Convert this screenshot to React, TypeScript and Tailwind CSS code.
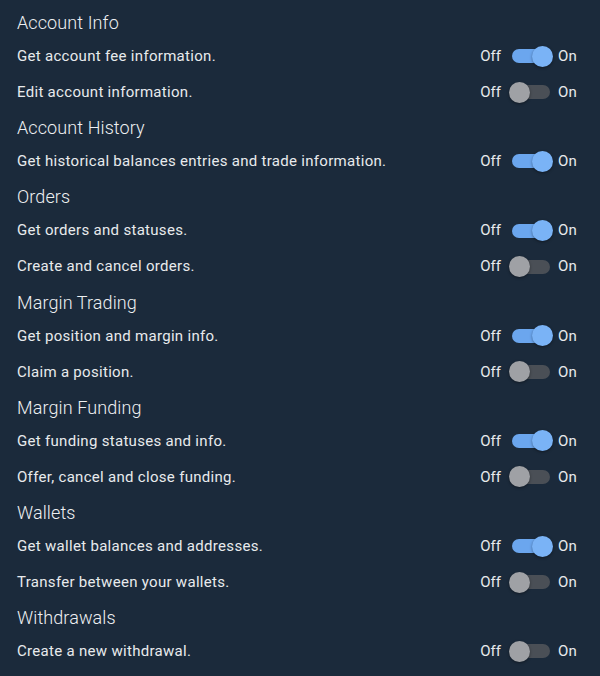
import React from "react";

type Row = { label: string; on: boolean };
type Section = { title: string; rows: Row[] };

const sections: Section[] = [
  { title: "Account Info", rows: [
    { label: "Get account fee information.", on: true },
    { label: "Edit account information.", on: false },
  ] },
  { title: "Account History", rows: [
    { label: "Get historical balances entries and trade information.", on: true },
  ] },
  { title: "Orders", rows: [
    { label: "Get orders and statuses.", on: true },
    { label: "Create and cancel orders.", on: false },
  ] },
  { title: "Margin Trading", rows: [
    { label: "Get position and margin info.", on: true },
    { label: "Claim a position.", on: false },
  ] },
  { title: "Margin Funding", rows: [
    { label: "Get funding statuses and info.", on: true },
    { label: "Offer, cancel and close funding.", on: false },
  ] },
  { title: "Wallets", rows: [
    { label: "Get wallet balances and addresses.", on: true },
    { label: "Transfer between your wallets.", on: false },
  ] },
  { title: "Withdrawals", rows: [
    { label: "Create a new withdrawal.", on: false },
  ] },
];

function Toggle({ on }: { on: boolean }) {
  return (
    <div className="relative w-[44px] h-[21px]">
      <div
        className={
          "absolute left-[3px] top-[3.5px] w-[38px] h-[14px] rounded-full " +
          (on ? "bg-[#6ba6ee]" : "bg-[#4a4f56]")
        }
      />
      <div
        className={
          "absolute top-0 w-[21px] h-[21px] rounded-full shadow-[0_1px_3px_rgba(0,0,0,0.4)] " +
          (on ? "left-[23px] bg-[#7ab3f6]" : "left-0 bg-[#9fa1a5]")
        }
      />
    </div>
  );
}

export default function App() {
  return (
    <div
      className="w-[600px] h-[676px] bg-[#1b2a3b] text-[#e8eaed] pt-[5px] pl-[17px] pr-[23px] overflow-hidden"
      style={{ fontFamily: "Roboto, 'Liberation Sans', sans-serif" }}
    >
      {sections.map((s) => (
        <div key={s.title}>
          <div className="pt-[6px] pb-[3px] h-[33.2px] text-[18px] leading-[24px] font-light tracking-[0.1px] text-[#eef0f2]">
            {s.title}
          </div>
          {s.rows.map((r) => (
            <div key={r.label} className="h-[36px] flex items-center justify-between text-[15px] tracking-[0.3px]">
              <span>{r.label}</span>
              <div className="flex items-center">
                <span className="mr-[8px] tracking-[0px]">Off</span>
                <Toggle on={r.on} />
                <span className="ml-[5px] tracking-[0.2px]">On</span>
              </div>
            </div>
          ))}
        </div>
      ))}
    </div>
  );
}
